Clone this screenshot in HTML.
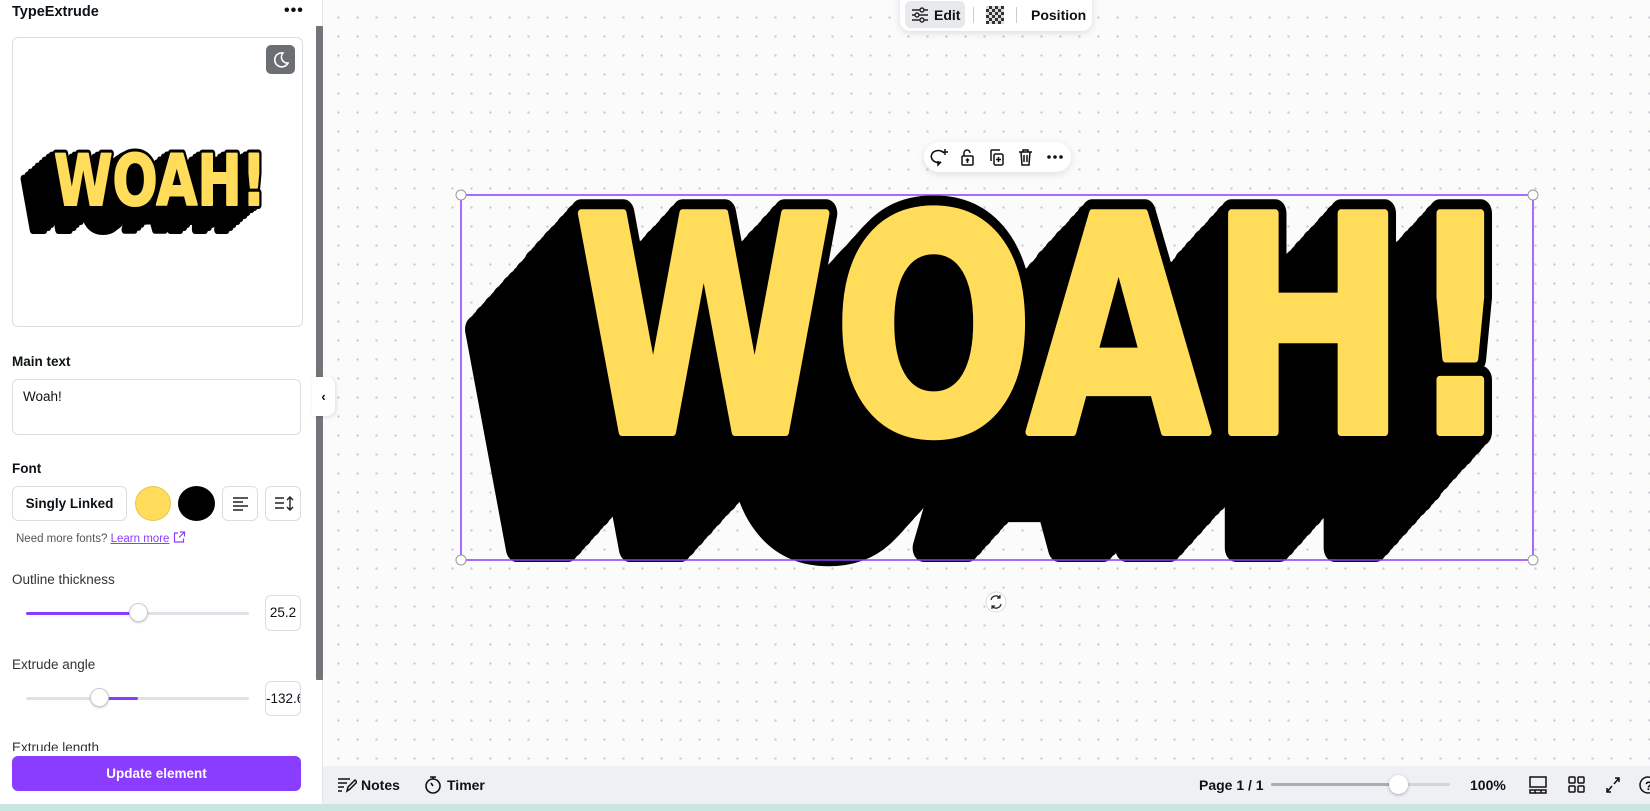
<!DOCTYPE html>
<html><head><meta charset="utf-8"><style>
*{box-sizing:border-box;margin:0;padding:0}
body{width:1650px;height:811px;overflow:hidden;position:relative;font-family:"Liberation Sans",sans-serif;color:#0d1216;background:#fff}
.abs{position:absolute}
.canvas{left:323px;top:0;width:1327px;height:766px;background-color:#fbfbfc;background-image:radial-gradient(circle,#c3c5d0 1px,transparent 1.3px);background-size:19px 19px;background-position:6px 8px}
.lbl{position:absolute;left:12px;font-size:13.5px;font-weight:bold}
.lbl2{position:absolute;left:12px;font-size:13.5px;color:#333}
.box{position:absolute;border:1px solid #dcdde2;border-radius:6px;background:#fff}
.track{position:absolute;height:3px;background:#dfe1e6;border-radius:2px}
.thumb{position:absolute;width:19px;height:19px;border-radius:50%;background:#fff;border:1px solid #c9cbd1;box-shadow:0 1px 2px rgba(0,0,0,.2)}
.bar{left:323px;top:766px;width:1327px;height:38px;background:#eef0f4}
.tb{background:#fff;border-radius:10px;box-shadow:0 2px 8px rgba(0,0,0,.12)}
</style></head><body>
<div class="abs canvas"></div>

<div class="abs" style="left:0;top:0;width:323px;height:805px;background:#fff;border-right:1px solid #e3e4e8"></div>
<div class="abs" style="left:12px;top:4px;font-size:14.5px;font-weight:bold">TypeExtrude</div>
<div class="abs" style="left:284px;top:2px;font-size:16px;font-weight:bold;letter-spacing:1px">•••</div>
<div class="abs" style="left:316px;top:26px;width:7px;height:654px;background:#727579;border-radius:1px"></div>

<div class="box" style="left:12px;top:37px;width:291px;height:290px"></div>
<div class="abs" style="left:266px;top:45px;width:29px;height:29px;background:#6b6e73;border-radius:5px">
<svg width="29" height="29" viewBox="0 0 29 29"><path d="M17 8a7 7 0 1 0 5 10a6 6 0 0 1-5-10z" fill="none" stroke="#fff" stroke-width="1.6"/></svg></div>
<svg class="abs" style="left:12px;top:37px" width="291" height="290" viewBox="12 37 291 290">
<g font-family="DejaVu Sans" font-weight="bold" font-size="70" stroke="#000" stroke-width="8" stroke-linejoin="round" fill="#000">
<text x="22" y="230" textLength="212" lengthAdjust="spacingAndGlyphs">WOAH!</text>
<text x="26" y="227" textLength="212" lengthAdjust="spacingAndGlyphs">WOAH!</text>
<text x="29" y="224" textLength="212" lengthAdjust="spacingAndGlyphs">WOAH!</text>
<text x="33" y="221" textLength="212" lengthAdjust="spacingAndGlyphs">WOAH!</text>
<text x="36" y="218" textLength="212" lengthAdjust="spacingAndGlyphs">WOAH!</text>
<text x="40" y="215" textLength="212" lengthAdjust="spacingAndGlyphs">WOAH!</text>
<text x="43" y="212" textLength="212" lengthAdjust="spacingAndGlyphs">WOAH!</text>
<text x="47" y="209" textLength="212" lengthAdjust="spacingAndGlyphs">WOAH!</text>
<text x="50" y="207" textLength="212" lengthAdjust="spacingAndGlyphs">WOAH!</text>
<text x="54" y="205" textLength="212" lengthAdjust="spacingAndGlyphs">WOAH!</text>
<text x="54" y="205" textLength="212" lengthAdjust="spacingAndGlyphs" fill="#ffdc5a" stroke="#ffdc5a" stroke-width="2">WOAH!</text>
</g></svg>

<div class="lbl" style="top:354px">Main text</div>
<div class="box" style="left:12px;top:379px;width:289px;height:56px"></div>
<div class="abs" style="left:23px;top:389px;font-size:13.5px">Woah!</div>

<div class="lbl" style="top:461px">Font</div>
<div class="box" style="left:12px;top:486px;width:115px;height:35px;text-align:center;line-height:33px;font-size:13.5px;font-weight:bold">Singly Linked</div>
<div class="abs" style="left:135px;top:486px;width:36px;height:35px;border-radius:50%;background:#ffdc5a;border:1px solid #e6c74e"></div>
<div class="abs" style="left:178px;top:486px;width:37px;height:35px;border-radius:50%;background:#000"></div>
<div class="box" style="left:222px;top:486px;width:36px;height:35px"><svg width="34" height="33" viewBox="0 0 34 33"><path d="M10 11h15M10 15h10M10 19h15M10 23h10" stroke="#222" stroke-width="1.4"/></svg></div>
<div class="box" style="left:265px;top:486px;width:36px;height:35px"><svg width="34" height="33" viewBox="0 0 34 33"><path d="M9 11h9M9 16h9M9 21h9M24 10v13M21 13l3-3 3 3M21 20l3 3 3-3" stroke="#222" stroke-width="1.4" fill="none"/></svg></div>
<div class="abs" style="left:16px;top:531px;font-size:11.5px;color:#555">Need more fonts? <span style="color:#8b3dff;text-decoration:underline">Learn more</span> <svg width="13" height="12" viewBox="0 0 13 12" style="vertical-align:-1px"><path d="M5 2H1.5v9h9V7.5M7 1h4.5v4.5M11.5 1L6 6.5" stroke="#8b3dff" stroke-width="1.2" fill="none"/></svg></div>

<div class="lbl2" style="top:572px">Outline thickness</div>
<div class="track" style="left:26px;top:612px;width:223px"></div>
<div class="track" style="left:26px;top:612px;width:113px;background:#8b3dff"></div>
<div class="thumb" style="left:129px;top:603px"></div>
<div class="box" style="left:265px;top:595px;width:36px;height:36px;line-height:34px;text-align:center;font-size:13.5px">25.2</div>

<div class="lbl2" style="top:657px">Extrude angle</div>
<div class="track" style="left:26px;top:697px;width:223px"></div>
<div class="track" style="left:100px;top:697px;width:38px;background:#8b3dff"></div>
<div class="thumb" style="left:90px;top:688px"></div>
<div class="box" style="left:265px;top:681px;width:36px;height:35px;line-height:33px;text-align:right;font-size:13.5px;overflow:hidden;white-space:nowrap;padding-right:1px">-132.6</div>
<div class="abs" style="left:0;top:740px;width:315px;height:11px;overflow:hidden"><div style="position:absolute;left:12px;top:0;font-size:13.5px;color:#333">Extrude length</div></div>

<div class="abs" style="left:12px;top:756px;width:289px;height:35px;background:#8b3dff;border-radius:6px;color:#fff;font-weight:bold;font-size:13.5px;text-align:center;line-height:35px">Update element</div>

<div class="abs" style="left:312px;top:377px;width:23px;height:39px;background:#fff;border-radius:0 8px 8px 0;box-shadow:1px 1px 4px rgba(0,0,0,.12);font-size:13px;line-height:39px;text-align:center;font-weight:bold">‹</div>

<div class="abs tb" style="left:900px;top:-10px;width:192px;height:41px;border-radius:0 0 10px 10px"></div>
<div class="abs" style="left:905px;top:1px;width:60px;height:27px;background:#e8e9ec;border-radius:6px"></div>
<svg class="abs" style="left:910px;top:5px" width="20" height="20" viewBox="0 0 20 20"><path d="M2 5h16M2 10h16M2 15h16" stroke="#222" stroke-width="1.4"/><circle cx="12" cy="5" r="2" fill="#e8e9ec" stroke="#222" stroke-width="1.4"/><circle cx="7" cy="10" r="2" fill="#e8e9ec" stroke="#222" stroke-width="1.4"/><circle cx="12" cy="15" r="2" fill="#e8e9ec" stroke="#222" stroke-width="1.4"/></svg>
<div class="abs" style="left:934px;top:7px;font-size:14px;font-weight:bold">Edit</div>
<div class="abs" style="left:973px;top:7px;width:1px;height:16px;background:#ccc"></div>
<div class="abs" style="left:986px;top:6px;width:18px;height:18px;background:conic-gradient(#333 25%,#ddd 0 50%,#333 0 75%,#ddd 0);background-size:6px 6px"></div>
<div class="abs" style="left:1016px;top:7px;width:1px;height:16px;background:#ccc"></div>
<div class="abs" style="left:1031px;top:7px;font-size:14px;font-weight:bold">Position</div>

<div class="abs tb" style="left:924px;top:142px;width:147px;height:30px;border-radius:15px"></div>
<svg class="abs" style="left:928px;top:145px" width="140" height="24" viewBox="0 0 140 24">
<g fill="none" stroke="#111" stroke-width="1.5">
<path d="M16 8a7 6 0 1 0-3 9l-3 3v-4M17 4v6M14 7h6"/>
<rect x="34" y="11" width="11" height="9" rx="1"/><path d="M36 11V8a3 3 0 0 1 6 0M39.5 18v-4M38 15.5l1.5-1.5 1.5 1.5"/>
<rect x="66" y="9" width="9" height="11" rx="1.5"/><path d="M63 16V6a1 1 0 0 1 1-1h8M70.5 12v5M68 14.5h5"/>
<path d="M91 7h13M95 7V5h5v2M93 7l1 13h7l1-13M96 10v7M99 10v7"/>
</g><g fill="#111"><circle cx="121" cy="12" r="1.8"/><circle cx="127" cy="12" r="1.8"/><circle cx="133" cy="12" r="1.8"/></g></svg>

<svg class="abs" style="left:0;top:0" width="1650" height="811" viewBox="0 0 1650 811">
<g font-family="DejaVu Sans" font-weight="bold" font-size="300" stroke="#000" stroke-width="28" stroke-linejoin="round" fill="#000">
<text x="469" y="548" textLength="940" lengthAdjust="spacingAndGlyphs">WOAH!</text>
<text x="474" y="543" textLength="940" lengthAdjust="spacingAndGlyphs">WOAH!</text>
<text x="478" y="538" textLength="940" lengthAdjust="spacingAndGlyphs">WOAH!</text>
<text x="483" y="533" textLength="940" lengthAdjust="spacingAndGlyphs">WOAH!</text>
<text x="487" y="528" textLength="940" lengthAdjust="spacingAndGlyphs">WOAH!</text>
<text x="492" y="523" textLength="940" lengthAdjust="spacingAndGlyphs">WOAH!</text>
<text x="496" y="518" textLength="940" lengthAdjust="spacingAndGlyphs">WOAH!</text>
<text x="501" y="513" textLength="940" lengthAdjust="spacingAndGlyphs">WOAH!</text>
<text x="505" y="508" textLength="940" lengthAdjust="spacingAndGlyphs">WOAH!</text>
<text x="510" y="503" textLength="940" lengthAdjust="spacingAndGlyphs">WOAH!</text>
<text x="515" y="498" textLength="940" lengthAdjust="spacingAndGlyphs">WOAH!</text>
<text x="519" y="493" textLength="940" lengthAdjust="spacingAndGlyphs">WOAH!</text>
<text x="524" y="488" textLength="940" lengthAdjust="spacingAndGlyphs">WOAH!</text>
<text x="528" y="482" textLength="940" lengthAdjust="spacingAndGlyphs">WOAH!</text>
<text x="533" y="477" textLength="940" lengthAdjust="spacingAndGlyphs">WOAH!</text>
<text x="537" y="472" textLength="940" lengthAdjust="spacingAndGlyphs">WOAH!</text>
<text x="542" y="467" textLength="940" lengthAdjust="spacingAndGlyphs">WOAH!</text>
<text x="546" y="462" textLength="940" lengthAdjust="spacingAndGlyphs">WOAH!</text>
<text x="551" y="457" textLength="940" lengthAdjust="spacingAndGlyphs">WOAH!</text>
<text x="556" y="452" textLength="940" lengthAdjust="spacingAndGlyphs">WOAH!</text>
<text x="560" y="447" textLength="940" lengthAdjust="spacingAndGlyphs">WOAH!</text>
<text x="565" y="442" textLength="940" lengthAdjust="spacingAndGlyphs">WOAH!</text>
<text x="569" y="437" textLength="940" lengthAdjust="spacingAndGlyphs">WOAH!</text>
<text x="574" y="432" textLength="940" lengthAdjust="spacingAndGlyphs">WOAH!</text>
<text x="574" y="432" textLength="940" lengthAdjust="spacingAndGlyphs" fill="#ffdc5a" stroke="#ffdc5a" stroke-width="8">WOAH!</text>
</g>
<rect x="461" y="195" width="1072" height="365" fill="none" stroke="#8b3dff" stroke-width="1.5"/>
<g fill="#fff" stroke="#999"><circle cx="461" cy="195" r="5"/><circle cx="1533" cy="195" r="5"/><circle cx="461" cy="560" r="5"/><circle cx="1533" cy="560" r="5"/></g>
<circle cx="996" cy="602" r="10" fill="#fff" stroke="#ddd"/>
<path d="M991 600a5 5 0 0 1 9-2M1001 604a5 5 0 0 1-9 2M1000 595v3h-3M992 609v-3h3" fill="none" stroke="#222" stroke-width="1.2"/>
</svg>

<div class="abs bar"></div>
<div class="abs" style="left:0;top:804px;width:1650px;height:7px;background:#c9e6df"></div>
<svg class="abs" style="left:337px;top:776px" width="20" height="18" viewBox="0 0 20 18"><path d="M1 3h12M1 7h9M1 11h6M1 15h4M10 15l1-4 7-7 2 2-7 7z" fill="none" stroke="#111" stroke-width="1.5"/></svg>
<div class="abs" style="left:361px;top:777px;font-size:14px;font-weight:bold">Notes</div>
<svg class="abs" style="left:424px;top:775px" width="18" height="20" viewBox="0 0 18 20"><circle cx="9" cy="11" r="7" fill="none" stroke="#111" stroke-width="1.6"/><path d="M6 2h6M9 2v2M9 11l-2-3" stroke="#111" stroke-width="1.6"/></svg>
<div class="abs" style="left:447px;top:777px;font-size:14px;font-weight:bold">Timer</div>
<div class="abs" style="left:1199px;top:777px;font-size:14px;font-weight:bold">Page 1 / 1</div>
<div class="abs" style="left:1271px;top:783px;width:179px;height:3px;background:#d3d5db;border-radius:2px"></div>
<div class="abs" style="left:1271px;top:783px;width:128px;height:3px;background:#a9adb6;border-radius:2px"></div>
<div class="abs" style="left:1389px;top:775px;width:19px;height:19px;border-radius:50%;background:#fff;box-shadow:0 1px 3px rgba(0,0,0,.3)"></div>
<div class="abs" style="left:1470px;top:777px;font-size:14px;font-weight:bold">100%</div>
<svg class="abs" style="left:1528px;top:774px" width="122" height="22" viewBox="0 0 122 22"><g fill="none" stroke="#111" stroke-width="1.5">
<rect x="2" y="3" width="16" height="10"/><path d="M2 16h16v3H2zM7 16v3M13 16v3"/>
<rect x="41" y="3" width="6" height="6" rx="1"/><rect x="50" y="3" width="6" height="6" rx="1"/><rect x="41" y="12" width="6" height="6" rx="1"/><rect x="50" y="12" width="6" height="6" rx="1"/>
<path d="M84 12l-5 6M79 14v4h4M86 10l5-6M87 4h4v4"/>
<circle cx="120" cy="11" r="8"/></g><text x="117" y="16" font-size="12" font-family="Liberation Sans" font-weight="bold">?</text></svg>
</body></html>
